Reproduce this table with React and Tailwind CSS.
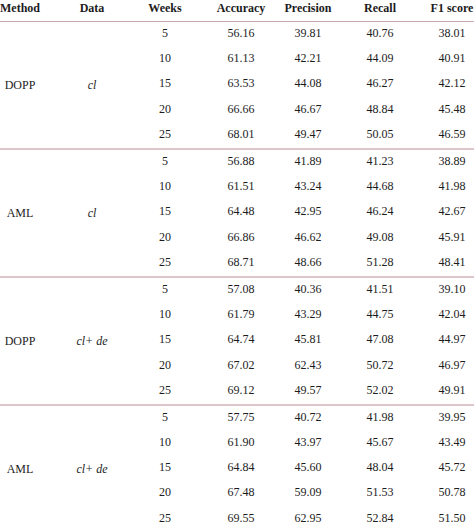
export default function App() {
  // grouped results: each block is one method / data combo, weeks 5..25
  const groups = [
    {
      method: 'DOPP',
      data: 'cl',
      rows: [
        ['5', '56.16', '39.81', '40.76', '38.01'],
        ['10', '61.13', '42.21', '44.09', '40.91'],
        ['15', '63.53', '44.08', '46.27', '42.12'],
        ['20', '66.66', '46.67', '48.84', '45.48'],
        ['25', '68.01', '49.47', '50.05', '46.59'],
      ],
    },
    {
      method: 'AML',
      data: 'cl',
      rows: [
        ['5', '56.88', '41.89', '41.23', '38.89'],
        ['10', '61.51', '43.24', '44.68', '41.98'],
        ['15', '64.48', '42.95', '46.24', '42.67'],
        ['20', '66.86', '46.62', '49.08', '45.91'],
        ['25', '68.71', '48.66', '51.28', '48.41'],
      ],
    },
    {
      method: 'DOPP',
      data: 'cl+ de',
      rows: [
        ['5', '57.08', '40.36', '41.51', '39.10'],
        ['10', '61.79', '43.29', '44.75', '42.04'],
        ['15', '64.74', '45.81', '47.08', '44.97'],
        ['20', '67.02', '62.43', '50.72', '46.97'],
        ['25', '69.12', '49.57', '52.02', '49.91'],
      ],
    },
    {
      method: 'AML',
      data: 'cl+ de',
      rows: [
        ['5', '57.75', '40.72', '41.98', '39.95'],
        ['10', '61.90', '43.97', '45.67', '43.49'],
        ['15', '64.84', '45.60', '48.04', '45.72'],
        ['20', '67.48', '59.09', '51.53', '50.78'],
        ['25', '69.55', '62.95', '52.84', '51.50'],
      ],
    },
  ];

  const cols = 'grid grid-cols-[72px_72px_74px_78px_56px_88px_56px]';

  return (
    <div className="w-[474px] h-[526px] overflow-hidden bg-white text-[#1c1c1c] text-[12px] font-['Liberation_Serif',serif]">
      <div className="-ml-[16px] w-[496px]">
        <div className={`${cols} h-[22px] border-b border-[#c9aaae] font-bold leading-[17px]`}>
          {['Method', 'Data', 'Weeks', 'Accuracy', 'Precision', 'Recall', 'F1 score'].map((h) => (
            <div key={h} className="text-center whitespace-nowrap">{h}</div>
          ))}
        </div>

        {groups.map((g, gi) => (
          <div
            key={gi}
            className={`${cols} grid-rows-[repeat(5,25.2px)] border-b-2 border-[#dcc6c9]`}
          >
            <div className="row-span-5 col-start-1 row-start-1 flex items-center justify-center">{g.method}</div>
            <div className="row-span-5 col-start-2 row-start-1 flex items-center justify-center italic">{g.data}</div>
            {g.rows.map((r, ri) =>
              r.map((v, ci) => (
                <div
                  key={ri + '-' + ci}
                  className="flex items-center justify-center pb-[3px]"
                  style={{ gridColumnStart: ci + 3, gridRowStart: ri + 1 }}
                >
                  {v}
                </div>
              ))
            )}
          </div>
        ))}
      </div>
    </div>
  );
}
